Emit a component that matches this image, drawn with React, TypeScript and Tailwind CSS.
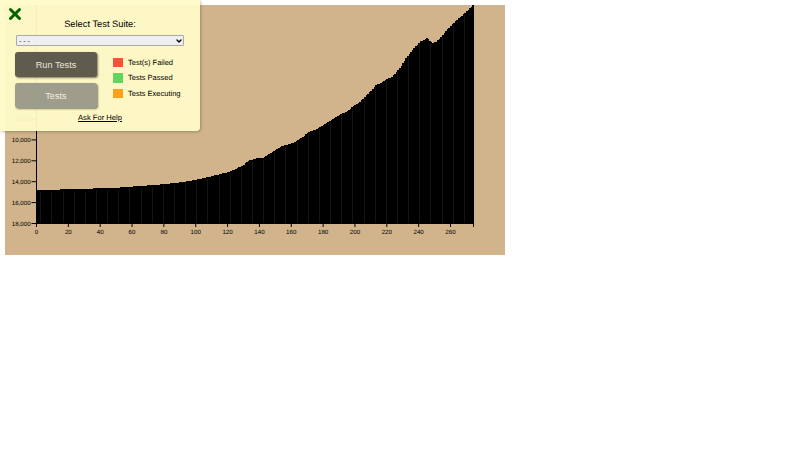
import { ChevronDown, X } from 'lucide-react';

// outline of the black area, read off the picture (page px minus 5px margin)
const outline: [number, number][] = [
  [31, 185], [55, 184.5], [95, 183.3], [115, 182.5], [135, 181], [155, 179.5], [175, 177.5], [195, 174], [215, 169.3],
  [225, 166.5], [235, 162], [245, 155.5], [250, 153.5], [258, 152.5], [267, 147.7], [275, 142], [288, 137.7], [295, 134],
  [305, 126], [312, 124.5], [325, 116], [345, 104], [355, 96.7], [365, 87], [371, 80], [378, 76.7],
  [388, 71], [395, 63], [402, 51.7], [407, 45.7], [415, 36.7], [422, 33], [428, 38], [432, 36.7],
  [442, 25], [450, 16.7], [460, 8], [468, 0],
];

function topAt(x: number) {
  for (let i = 1; i < outline.length; i++) {
    const [x0, y0] = outline[i - 1];
    const [x1, y1] = outline[i];
    if (x <= x1) return y0 + ((y1 - y0) * (x - x0)) / (x1 - x0);
  }
  return 0;
}

const step = 414 / 260;
const bars = Array.from({ length: 275 }, (_, i) => {
  const x = 31 + i * step;
  return { x, y: topAt(x + step / 2) };
});
const xTicks = Array.from({ length: 14 }, (_, i) => i * 20);
const yTicks = [8000, 10000, 12000, 14000, 16000, 18000];
const yPos = (v: number) => 218.5 - ((18000 - v) / 1000) * 10.45;

function Chart() {
  return (
    <svg width="500" height="250" className="block bg-[#d2b48c]" fontFamily="'Liberation Sans', Arial, sans-serif">
      <g shapeRendering="crispEdges">
        {bars.map((b) => (
          <rect key={b.x} x={b.x} y={b.y} width={step} height={218.5 - b.y} fill="#000" />
        ))}
        {/* faint seams between the bars */}
        {bars.filter((_, i) => i % 7 === 3).map((b) => (
          <line key={b.x} x1={b.x} x2={b.x} y1={b.y + 2} y2="218" stroke="#141414" strokeWidth="1" />
        ))}
      </g>
      <path d="M31.5 0V218.5H468.5" fill="none" stroke="#000" />
      <path d="M468.5 218.5V222" stroke="#000" />
      {yTicks.map((v) => (
        <g key={v}>
          <line x1="26.5" x2="31" y1={yPos(v)} y2={yPos(v)} stroke="#000" />
          <text x="25.7" y={yPos(v) + 2.3} fontSize="6.2" textAnchor="end" fill="#000" className="[text-rendering:geometricPrecision]">
            {v.toLocaleString('en-US')}
          </text>
        </g>
      ))}
      {xTicks.map((v) => (
        <g key={v}>
          <line x1={31.5 + v * step} x2={31.5 + v * step} y1="218.5" y2="222" stroke="#000" />
          <text x={31.5 + v * step} y="229" fontSize="6.2" textAnchor="middle" fill="#000" className="[text-rendering:geometricPrecision]">
            {v}
          </text>
        </g>
      ))}
    </svg>
  );
}

function Legend({ color, label }: { color: string; label: string }) {
  return (
    <div className="flex items-center gap-[5.5px] h-[15.7px]">
      <span className={`w-[9.5px] h-[9.5px] ${color}`} />
      <span className="text-[7.5px] whitespace-nowrap text-black">{label}</span>
    </div>
  );
}

export default function App() {
  return (
    <div className="relative w-[800px] h-[450px] bg-white p-[5px] overflow-hidden font-['Liberation_Sans',Arial,sans-serif] [text-rendering:geometricPrecision]">
      <Chart />
      <div className="absolute left-0 top-0 w-[200px] h-[131px] bg-[#fffbc8]/95 rounded-br-[4px] shadow-[1px_1px_3px_rgba(0,0,0,0.25)] px-[15px] pt-[18px]">
        <X className="absolute left-[5.5px] top-[5px] w-[18px] h-[18px] text-[#006400]" strokeWidth={4} />
        <div className="text-center text-[9.3px] leading-[13px] text-black">Select Test Suite:</div>
        <div className="relative mt-[4px] ml-px w-[168px] h-[11px]">
          <select className="block appearance-none w-full h-full pl-[2px] text-[7px] leading-[9px] bg-[#efefef] border border-[#aaa] rounded-[1px] text-[#333]">
            <option>- - -</option>
          </select>
          <ChevronDown className="absolute right-[1px] top-[1.5px] w-[8px] h-[8px] text-black" strokeWidth={4} />
        </div>
        <div className="flex mt-[6px]">
          <div className="flex flex-col gap-[6px] w-[82px]">
            <button className="h-[25px] pt-[2px] rounded-[3px] bg-[#5f5c4d] text-[#e8e6dc] text-[9.2px] shadow-[1px_1px_2px_rgba(0,0,0,0.5)]">
              Run Tests
            </button>
            <button className="h-[25px] pt-[2px] rounded-[3px] bg-[#9e9c8a] text-[#f0eee4] text-[9.2px] shadow-[1px_1px_2px_rgba(0,0,0,0.5)]">
              Tests
            </button>
          </div>
          <div className="ml-[16px] pt-[2.5px] flex flex-col">
            <Legend color="bg-[#f9503c]" label="Test(s) Failed" />
            <Legend color="bg-[#5fd65f]" label="Tests Passed" />
            <Legend color="bg-[#f9a11b]" label="Tests Executing" />
          </div>
        </div>
        <div className="mt-[5px] text-center text-[7.6px] leading-[10px] underline text-black">Ask For Help</div>
      </div>
    </div>
  );
}
